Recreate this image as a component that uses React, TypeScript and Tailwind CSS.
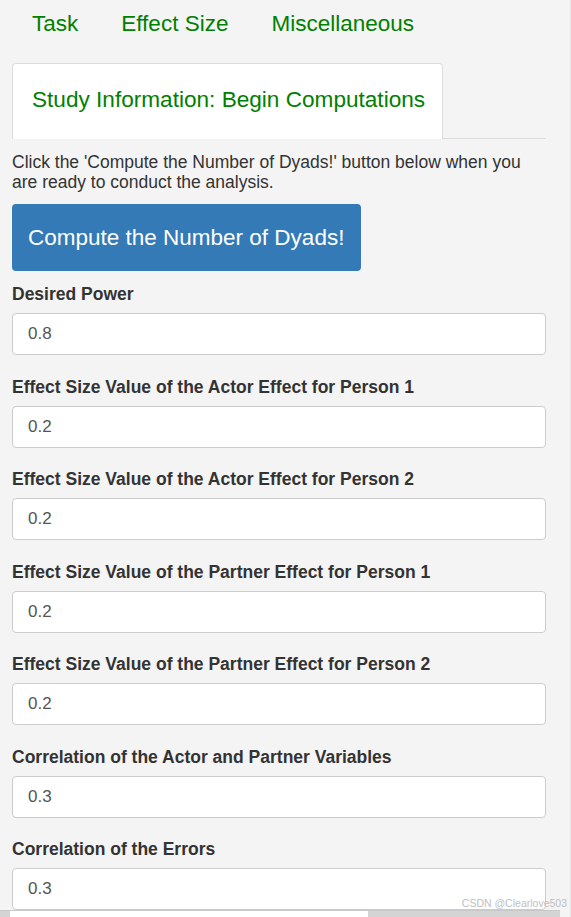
const fields = [
  { label: "Desired Power", value: "0.8" },
  { label: "Effect Size Value of the Actor Effect for Person 1", value: "0.2" },
  { label: "Effect Size Value of the Actor Effect for Person 2", value: "0.2" },
  { label: "Effect Size Value of the Partner Effect for Person 1", value: "0.2" },
  { label: "Effect Size Value of the Partner Effect for Person 2", value: "0.2" },
  { label: "Correlation of the Actor and Partner Variables", value: "0.3" },
  { label: "Correlation of the Errors", value: "0.3" },
];

export default function App() {
  return (
    <div className="relative h-[917px] w-[571px] overflow-hidden bg-[#f4f4f4] font-['Liberation_Sans',Arial,sans-serif] text-[#333]">
      {/* top nav */}
      <div className="flex h-[48px] items-center gap-[43px] pl-[32px] text-[22.5px] text-[#008000]">
        <span>Task</span>
        <span>Effect Size</span>
        <span>Miscellaneous</span>
      </div>

      {/* tabs */}
      <div className="ml-[12px] mt-[15px] flex w-[534px] items-end border-b border-[#ddd]">
        <div className="-mb-px flex h-[76px] w-[431px] items-center rounded-t-[4px] border border-b-0 border-[#ddd] bg-white pb-[3px] pl-[19px] text-[22.6px] text-[#008000]">
          Study Information: Begin Computations
        </div>
      </div>

      <div className="px-[12px] pt-[13px]">
        <p className="w-[525px] text-[17.5px] leading-[20px]">
          Click the 'Compute the Number of Dyads!' button below when you are ready to conduct the analysis.
        </p>
        <button className="mt-[12px] h-[67px] w-[349px] rounded-[4px] bg-[#337ab7] pl-[16px] text-left text-[22.5px] text-white">
          Compute the Number of Dyads!
        </button>

        <div className="mt-[13px] flex flex-col gap-[21.5px]">
          {fields.map((f) => (
            <div key={f.label}>
              <div className="text-[17.5px] font-bold leading-[20px]">{f.label}</div>
              <div className="mt-[9px] flex h-[42px] w-[534px] items-center rounded-[4px] border border-[#ccc] bg-white pl-[15px] text-[17px] text-[#555]">
                {f.value}
              </div>
            </div>
          ))}
        </div>
      </div>

      {/* bottom scrollbar strip */}
      <div className="absolute bottom-0 left-0 flex h-[7px] w-[560px] border-t border-[#c8c8c8] bg-[#d4d4d4] pl-[10px]">
        <div className="h-full w-[358px] bg-white" />
      </div>
      <div className="absolute bottom-[5px] right-[4px] text-[10.5px] text-[#c0c0c0]">CSDN @Clearlove503</div>
      <div className="absolute right-0 top-0 h-full w-px bg-[#e6e6e6]" />
    </div>
  );
}
